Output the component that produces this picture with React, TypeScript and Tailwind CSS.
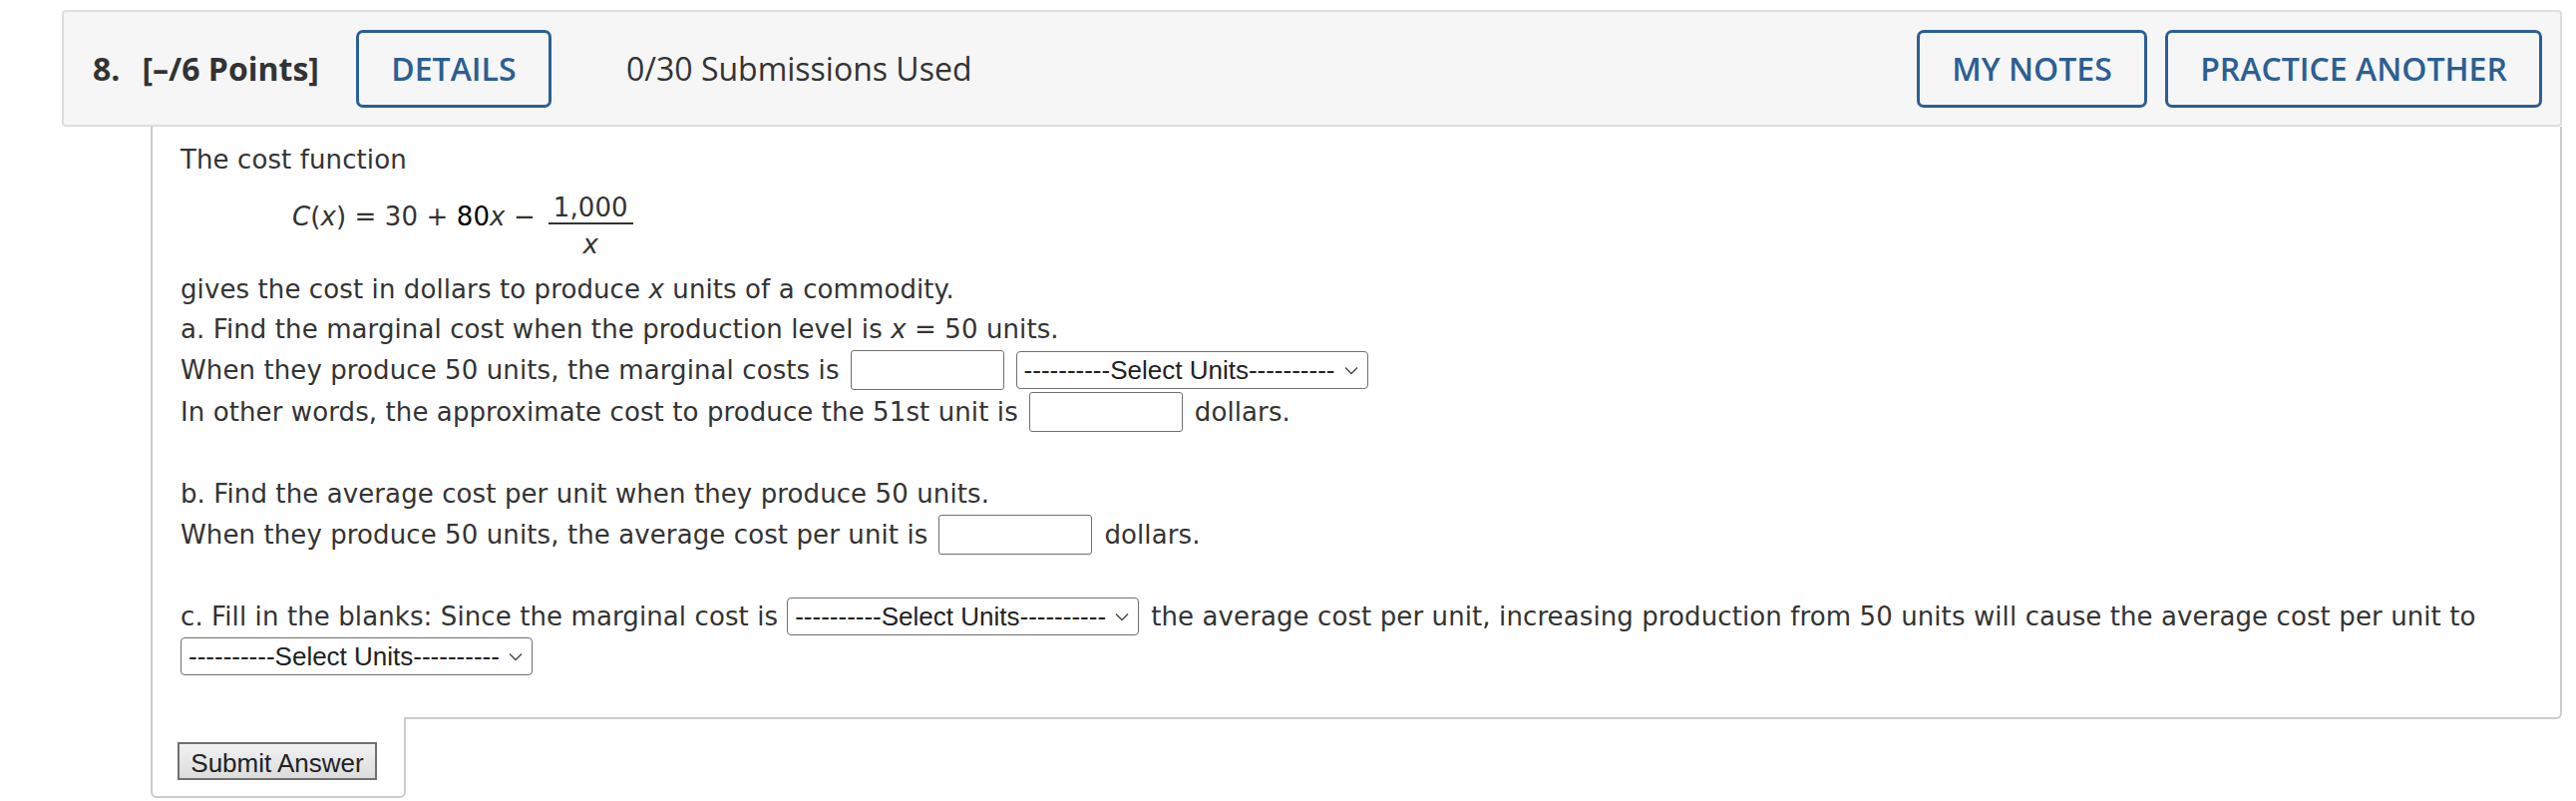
import React from "react";

function HeaderButton({ label, width }: { label: string; width: string }) {
  return (
    <button
      className={`${width} h-[78px] rounded-[7px] border-[3px] border-[#2b5f94] bg-[#f6f6f6] font-semibold text-[#2b5f94]`}
    >
      {label}
    </button>
  );
}

function Blank() {
  return <input className="h-[40px] w-[154px] rounded-[3px] border border-[#6f6f6f] bg-white" />;
}

function UnitSelect() {
  return (
    <span className="inline-flex h-[38px] w-[353px] items-center rounded-[4px] border border-[#6f6f6f] bg-white pl-[7px] pr-[9px] font-['Liberation_Sans',Arial,sans-serif] text-[26px] tracking-normal text-[#222]">
      <span className="flex-1">----------Select Units----------</span>
      <svg width="14" height="9" viewBox="0 0 14 9" fill="none">
        <path d="M1 1.5l6 6 6-6" stroke="#444" strokeWidth="1.3" />
      </svg>
    </span>
  );
}

export default function App() {
  return (
    <div className="min-h-[803px] bg-white pt-[10px] text-[#333]">
      {/* question header */}
      <div className="ml-[62px] mr-[14px] flex h-[117px] items-center rounded-[4px] border-2 border-[#dddddd] bg-[#f6f6f6] pl-[29px] pr-[18px] font-['Open_Sans',sans-serif] text-[32px] text-[#333]">
        <span className="font-bold">8.</span>
        <span className="ml-[22px] font-bold">[–/6 Points]</span>
        <div className="ml-[37px]">
          <HeaderButton label="DETAILS" width="w-[196px]" />
        </div>
        <span className="ml-[75px]">0/30 Submissions Used</span>
        <div className="ml-auto flex gap-[18px]">
          <HeaderButton label="MY NOTES" width="w-[231px]" />
          <HeaderButton label="PRACTICE ANOTHER" width="w-[378px]" />
        </div>
      </div>

      {/* question body */}
      <div className="ml-[151px] mr-[14px] rounded-br-[6px] border-x-2 border-b-2 border-[#cccccc] pb-[41px] pl-[28px] pt-[13px] font-['DejaVu_Sans',Verdana,sans-serif] text-[26px] leading-[40px] tracking-[0.1px]">
        <div className="h-[40px]">The cost function</div>

        <div className="flex h-[90px] items-start pl-[112px]">
          <span className="mt-[17px]">
            <i>C</i>(<i>x</i>) = 30 + <span className="text-black">80</span>
            <i>x</i> −
          </span>
          <span className="ml-[13px] mt-[13px] flex flex-col items-center">
            <span className="px-[5px] leading-[30px]">1,000</span>
            <span className="h-[2px] w-full bg-[#333]" />
            <span className="pt-[5px] italic leading-[30px]">x</span>
          </span>
        </div>

        <div className="h-[40px]">
          gives the cost in dollars to produce <i>x</i> units of a commodity.
        </div>
        <div className="h-[40px]">
          a. Find the marginal cost when the production level is <i>x</i> = 50 units.
        </div>
        <div className="flex h-[42px] items-center">
          <span>When they produce 50 units, the marginal costs is</span>
          <span className="ml-[11px]">
            <Blank />
          </span>
          <span className="ml-[12px]">
            <UnitSelect />
          </span>
        </div>
        <div className="flex h-[42px] items-center">
          <span>In other words, the approximate cost to produce the 51st unit is</span>
          <span className="ml-[11px]">
            <Blank />
          </span>
          <span className="ml-[12px]">dollars.</span>
        </div>

        <div className="h-[41px]" />

        <div className="h-[40px]">b. Find the average cost per unit when they produce 50 units.</div>
        <div className="flex h-[42px] items-center">
          <span>When they produce 50 units, the average cost per unit is</span>
          <span className="ml-[11px]">
            <Blank />
          </span>
          <span className="ml-[12px]">dollars.</span>
        </div>

        <div className="h-[41px]" />

        <div className="flex h-[40px] items-center">
          <span>c. Fill in the blanks: Since the marginal cost is</span>
          <span className="ml-[9px]">
            <UnitSelect />
          </span>
          <span className="ml-[12px]">
            the average cost per unit, increasing production from 50 units will cause the average cost per unit to
          </span>
        </div>
        <div className="flex h-[40px] items-center">
          <UnitSelect />
        </div>
      </div>

      {/* submit tab */}
      <div className="-mt-[2px] ml-[151px] h-[81px] w-[256px] rounded-b-[6px] border-x-2 border-b-2 border-[#cccccc] bg-white pl-[25px] pt-[25px]">
        <button className="h-[38px] w-[200px] border-2 border-[#707070] bg-linear-to-b from-[#f2f2f2] to-[#dcdcdc] font-['Liberation_Sans',Arial,sans-serif] text-[26px] text-[#222]">
          Submit Answer
        </button>
      </div>
    </div>
  );
}
